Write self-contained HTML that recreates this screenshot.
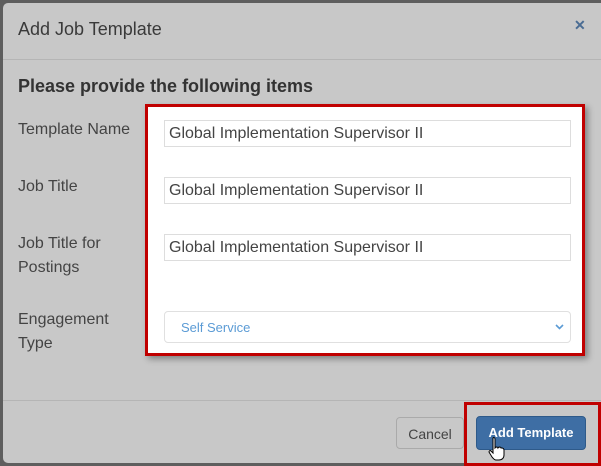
<!DOCTYPE html><html><head><style>
body{margin:0;width:601px;height:466px;background:#5e5e5e;position:relative;overflow:hidden;font-family:"Liberation Sans",Arial,sans-serif}
.m{position:absolute;left:3px;top:3px;width:610px;height:460px;background:#c8c8c8;border-radius:5px}
.a{position:absolute}
.hd{left:18px;top:19px;font-size:18px;color:#3a3a3a}
.x{left:574px;top:17px;font-size:14px;font-weight:bold;color:#4a6c93}
.ln{left:3px;width:600px;height:1px;background:#b5b5b5}
.t{left:18px;top:76px;font-size:18px;font-weight:bold;color:#333}
.l{left:18px;font-size:16px;color:#444;line-height:24px}
.red{left:145px;top:104px;width:434px;height:246px;border:3px solid #c00000;background:#fff;box-shadow:3px 3px 6px rgba(0,0,0,.35)}
.in{left:164px;width:407px;height:27px;border:1px solid #ddd;background:#fff;font-size:16px;color:#444;line-height:25px;padding-left:4px;box-sizing:border-box}
.sel{left:164px;top:311px;height:32px;border:1px solid #e0e0e0;border-radius:4px;background:#fff;font-size:13px;color:#5b9bd5;line-height:31px;padding-left:16px;box-sizing:border-box;width:407px}
.rb{left:464px;top:402px;width:131px;height:58px;border:3px solid #c00000}
.c{left:396px;top:417px;width:68px;height:32px;border:1px solid #aaa;border-radius:4px;background:#c8c8c8;font-size:14px;color:#444;text-align:center;line-height:32px;box-sizing:border-box}
.b{left:476px;top:416px;width:110px;height:34px;background:#3e6ea4;border:1px solid #2e5a8a;border-radius:4px;font-size:13px;font-weight:bold;color:#fff;text-align:center;line-height:32px;box-sizing:border-box}
</style></head><body>
<div class="m"></div>
<div class="a hd">Add Job Template</div>
<div class="a x">✕</div>
<div class="a ln" style="top:59px"></div>
<div class="a t">Please provide the following items</div>
<div class="a l" style="top:118px">Template Name</div>
<div class="a l" style="top:175px">Job Title</div>
<div class="a l" style="top:232px">Job Title for<br>Postings</div>
<div class="a l" style="top:308px">Engagement<br>Type</div>
<div class="a red"></div>
<div class="a in" style="top:120px">Global Implementation Supervisor II</div>
<div class="a in" style="top:177px">Global Implementation Supervisor II</div>
<div class="a in" style="top:234px">Global Implementation Supervisor II</div>
<div class="a sel">Self Service<svg style="position:absolute;right:6px;top:12px" width="9" height="6" viewBox="0 0 9 6"><path d="M1 1l3.5 3.5L8 1" stroke="#5b9bd5" stroke-width="1.6" fill="none"/></svg></div>
<div class="a ln" style="top:400px"></div>
<div class="a c">Cancel</div>
<div class="a rb"></div>
<div class="a b">Add Template</div>
<svg class="a" style="left:488px;top:436px" width="18" height="26" viewBox="0 0 18 26"><path d="M5 2c1-1 2 0 2 1v9l1-1c1 0 2 0 2 1l1-1c1 0 2 0 2 1l1 0c1 0 2 1 2 2v5c0 3-2 5-5 5H8c-2 0-3-2-4-3l-3-5c0-1 1-2 2-1l2 2V3z" fill="#fff" stroke="#000" stroke-width="1"/></svg>
</body></html>
